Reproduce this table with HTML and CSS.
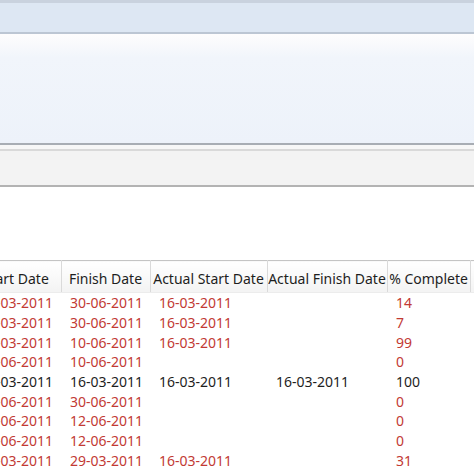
FILE: index.html
```html
<!DOCTYPE html>
<html lang="en">
<head>
    <meta charset="UTF-8">
    <title>Task Schedule</title>
    <link rel="stylesheet" href="styles.css">
</head>
<body>
    <div class="ribbon-tabs"></div>
    <div class="ribbon-body"></div>
    <div class="ribbon-gap"></div>
    <div class="toolbar"></div>
    <div class="spacer"></div>
    <div class="grid-wrap">
        <table class="grid">
            <colgroup>
                <col style="width: 90px">
                <col style="width: 89px">
                <col style="width: 117px">
                <col style="width: 120px">
                <col style="width: 83px">
                <col style="width: 40px">
            </colgroup>
            <thead>
                <tr>
                    <th>Start Date</th>
                    <th>Finish Date</th>
                    <th>Actual Start Date</th>
                    <th>Actual Finish Date</th>
                    <th>% Complete</th>
                    <th></th>
                </tr>
            </thead>
            <tbody>
                <tr class="late"><td>16-03-2011</td><td>30-06-2011</td><td>16-03-2011</td><td></td><td>14</td><td></td></tr>
                <tr class="late"><td>16-03-2011</td><td>30-06-2011</td><td>16-03-2011</td><td></td><td>7</td><td></td></tr>
                <tr class="late"><td>16-03-2011</td><td>10-06-2011</td><td>16-03-2011</td><td></td><td>99</td><td></td></tr>
                <tr class="late"><td>10-06-2011</td><td>10-06-2011</td><td></td><td></td><td>0</td><td></td></tr>
                <tr><td>16-03-2011</td><td>16-03-2011</td><td>16-03-2011</td><td>16-03-2011</td><td>100</td><td></td></tr>
                <tr class="late"><td>30-06-2011</td><td>30-06-2011</td><td></td><td></td><td>0</td><td></td></tr>
                <tr class="late"><td>12-06-2011</td><td>12-06-2011</td><td></td><td></td><td>0</td><td></td></tr>
                <tr class="late"><td>12-06-2011</td><td>12-06-2011</td><td></td><td></td><td>0</td><td></td></tr>
                <tr class="late"><td>16-03-2011</td><td>29-03-2011</td><td>16-03-2011</td><td></td><td>31</td><td></td></tr>
            </tbody>
        </table>
    </div>
</body>
</html>
```

FILE: styles.css
```css
body {
    margin: 0;
    overflow: hidden;
    font-family: 'Noto Sans', 'Open Sans', sans-serif;
    font-size: 14px;
    color: #1e1e1e;
    background: #ffffff;
}
.ribbon-tabs {
    height: 29px;
    background: #dde7f3;
    border-top: 3px solid #c9d2de;
    border-bottom: 2px solid #bcc6d3;
}
.ribbon-body {
    height: 109px;
    background: linear-gradient(#fefdfd 0%, #f1f5fb 22%, #edf2fa 100%);
    border-bottom: 2px solid #a8adb4;
}
.ribbon-gap {
    height: 4px;
    background: #f7f7f7;
    border-bottom: 2px solid #d9d9d9;
}
.toolbar {
    height: 34px;
    background: #f3f3f3;
    border-bottom: 2px solid #b3b3b3;
}
.spacer {
    height: 73px;
}
.grid-wrap {
    overflow: hidden;
}
.grid {
    width: 539px;
    margin-left: -29px;
    table-layout: fixed;
    border-collapse: collapse;
    white-space: nowrap;
}
.grid th {
    height: 27px;
    padding: 4px 0 0;
    font-weight: normal;
    text-align: center;
    overflow: hidden;
    background: linear-gradient(#ffffff, #f3f3f3);
    border-top: 1px solid #c4c4c4;
    border-right: 1px solid #dadada;
    border-bottom: 1px solid #ececec;
}
.grid td {
    height: 19.7px;
    padding: 0 0 0 9px;
    line-height: 19px;
}
.late td {
    color: #c23a34;
}
```
